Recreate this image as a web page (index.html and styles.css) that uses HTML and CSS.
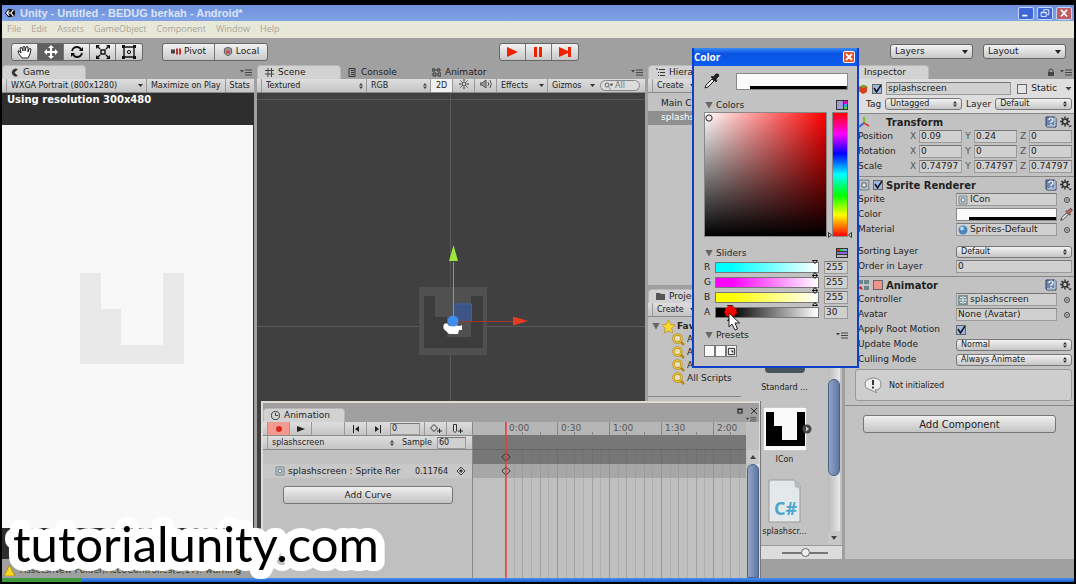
FILE: index.html
```html
<!DOCTYPE html>
<html lang="en">
<head>
  <meta charset="UTF-8">
  <meta name="viewport" content="width=device-width, initial-scale=1">
  <title>Unity - Untitled - BEDUG berkah - Android*</title>
  <link rel="stylesheet" href="styles.css">
</head>
<body>
  <!-- Shared icons -->
  <svg class="defs" aria-hidden="true">
    <symbol id="i-menu" viewBox="0 0 12 8"><path d="M0 2h4L2 4.500z" fill="#444"/><path d="M5 2h7M5 4.500h7M5 7h7" stroke="#444"/></symbol>
    <symbol id="i-gear" viewBox="0 0 12 12"><circle cx="5" cy="5.500" r="2.500" fill="none" stroke="#333" stroke-width="1.600"/><path d="M5 .5v2M5 8.500v2M0 5.500h2M8 5.500h2M1.500 2l1.400 1.400M7.100 7.600l1.400 1.400M1.500 9l1.400-1.400M7.100 3.400L8.500 2" stroke="#333" stroke-width="1.500"/><path d="M8 9.500h4l-2 2z" fill="#333"/></symbol>
    <symbol id="i-help" viewBox="0 0 12 12"><path d="M1 1h9l1 1v9H2l-1-1z" fill="#6f86ad" stroke="#2d3f63"/><path d="M10 1v9H2" fill="none" stroke="#dfe8f5"/><path d="M4 4q0-2 2-2t2 2q0 1-2 2v1M6 8v1" fill="none" stroke="#fff" stroke-width="1.200"/></symbol>
    <symbol id="i-pick" viewBox="0 0 8 8"><circle cx="4" cy="4" r="2.500" fill="none" stroke="#444"/><circle cx="4" cy="4" r=".8" fill="#444"/></symbol>
    <symbol id="i-drop" viewBox="0 0 16 16"><path d="M1 15l1-3 6-6 2 2-6 6z" fill="#eee" stroke="#222"/><path d="M7 4l5 5 1-1-1-2 3-3q0-3-3-2L9 4 8 3z" fill="currentColor" stroke="#111" stroke-width=".6"/></symbol>
    <symbol id="i-find" viewBox="0 0 13 13"><path d="M8 8l4 4" stroke="#b58a13" stroke-width="2.500"/><circle cx="5.500" cy="5.500" r="4" fill="#e5dfc0" stroke="#b58a13" stroke-width="2.400"/><circle cx="5.500" cy="5.500" r="4" fill="none" stroke="#f0cb3c" stroke-width="1.200"/></symbol>
    <symbol id="i-sprite" viewBox="0 0 10 10"><path d="M1 1h8v8H1z" fill="#b9c3c7" stroke="#7d8b91"/><circle cx="5" cy="5" r="2" fill="#dfe6e8" stroke="#6d7b80"/></symbol>
    <symbol id="i-key" viewBox="0 0 10 10"><path d="M5 .8L9.200 5 5 9.200.8 5z" fill="none" stroke="#333"/></symbol>
  </svg>

  <div class="app">
    <header class="titlebar">
      <svg class="unity-logo" viewBox="0 0 14 12"><path d="M1 6l4-5 7 1 1 4-1 4-7 1z" fill="#111"/><path d="M3 6l3-3M3 6l3 3M3 6h5M8 6l3-4M8 6l3 4" stroke="#fff" stroke-width="1.300"/></svg>
      <h1>Unity - Untitled - BEDUG berkah - Android*</h1>
      <div class="win-btns">
        <button class="win-btn" aria-label="Minimize"><svg viewBox="0 0 15 13"><path d="M3 8h6v2H3z" fill="#fff"/></svg></button>
        <button class="win-btn" aria-label="Restore"><svg viewBox="0 0 15 13"><path d="M6 4V2h6v6h-2M3 5h6v5H3zM3 5.500h6" fill="none" stroke="#fff"/></svg></button>
        <button class="win-btn close" aria-label="Close"><svg viewBox="0 0 15 13"><path d="M4 2l7 8M11 2l-7 8" stroke="#fff" stroke-width="2"/></svg></button>
      </div>
    </header>

    <nav class="menubar">
      <a href="#">File</a><a href="#">Edit</a><a href="#">Assets</a><a href="#">GameObject</a><a href="#">Component</a><a href="#">Window</a><a href="#">Help</a>
    </nav>

    <div class="toolbar">
      <div class="tools-left">
        <div class="btn-group tools">
          <button aria-label="Hand"><svg viewBox="0 0 16 14"><path d="M5 13L2 9 1 6q1-1 2 1l1 1L3 3q1-1 2 0l1 3V2q1-1 2 0v4l1-4q1-1 2 0v5l1-3q1-1 2 0l-1 5-2 4z" fill="#fff" stroke="#222"/></svg></button>
          <button class="on" aria-label="Move"><svg viewBox="0 0 16 14"><path d="M8 0l3 3H9v3h3V4l3 3-3 3V8H9v3h2l-3 3-3-3h2V8H4v2L1 7l3-3v2h3V3H5z" fill="#fff"/></svg></button>
          <button aria-label="Rotate"><svg viewBox="0 0 16 14"><path d="M3 6q1-4 5-4 3 0 4 3M13 8q-1 4-5 4-3 0-4-3" fill="none" stroke="#111" stroke-width="1.800"/><path d="M14 2v4h-4zM2 12V8h4z" fill="#111"/></svg></button>
          <button aria-label="Scale"><svg viewBox="0 0 16 14"><path d="M6 5h4v4H6zM5 4L2 1M11 4l3-3M5 10l-3 3M11 10l3 3" fill="none" stroke="#111" stroke-width="1.400"/><path d="M1 0h4L1 4zM15 0h-4l4 4zM1 14h4l-4-4zM15 14h-4l4-4z" fill="#111"/></svg></button>
          <button aria-label="Rect"><svg viewBox="0 0 16 14"><path d="M3 2h10v10H3z" fill="none" stroke="#111" stroke-width="1.400"/><circle cx="8" cy="7" r="1.600" fill="none" stroke="#111"/><path d="M1 0h3v3H1zM12 0h3v3h-3zM1 11h3v3H1zM12 11h3v3h-3z" fill="#111"/></svg></button>
        </div>
        <div class="btn-group pivot">
          <button><svg viewBox="0 0 10 8"><path d="M0 2h4v4H0z" fill="#444"/><path d="M5 1h2v6H5zM8 1h2v6H8z" fill="#b33"/></svg>Pivot</button>
          <button><svg viewBox="0 0 10 10"><path d="M5 0l4 2v5L5 10 1 7V2z" fill="#999" stroke="#555"/><path d="M3 4h4v3H3z" fill="#c44"/></svg>Local</button>
        </div>
      </div>
      <div class="btn-group play">
        <button aria-label="Play"><svg viewBox="0 0 14 12"><path d="M2 1l11 5-11 5z" fill="#ee2200"/></svg></button>
        <button aria-label="Pause"><svg viewBox="0 0 14 12"><path d="M3 1h3v10H3zM8 1h3v10H8z" fill="#ee2200"/></svg></button>
        <button aria-label="Step"><svg viewBox="0 0 14 12"><path d="M1 1l9 4V1h3v10h-3V7l-9 4z" fill="#ee2200"/></svg></button>
      </div>
      <div class="tools-right">
        <select class="top-select" aria-label="Layers"><option>Layers</option></select>
        <select class="top-select" aria-label="Layout"><option>Layout</option></select>
      </div>
    </div>

    <main class="workspace">
      <!-- Game view -->
      <section class="panel">
        <div class="tabs"><button class="tab active"><svg viewBox="0 0 8 8"><path d="M7 1a3.500 3.500 0 1 0 0 6L4 4z" fill="#333"/></svg>Game</button><svg class="tab-menu"><use href="#i-menu"/></svg></div>
        <div class="subbar game-bar">
          <select class="bar-select dd" aria-label="Aspect"><option>WXGA Portrait (800x1280)</option></select>
          <button>Maximize on Play</button>
          <button>Stats</button>
        </div>
        <div class="game-view">
          <p>Using resolution 300x480</p>
          <div class="game-screen"><svg viewBox="0 0 104 91"><path d="M0 0h21v36h20v36h42V0h21v91H0z" fill="#e9e9e9"/></svg></div>
        </div>
      </section>

      <!-- Scene view -->
      <section class="panel">
        <div class="tabs">
          <button class="tab active"><svg viewBox="0 0 9 9"><path d="M3 0v9M6.500 0v9M0 2.500h9M0 6h9" stroke="#444"/></svg>Scene</button>
          <button class="tab"><svg viewBox="0 0 9 9"><path d="M1 .5h6v8H1zM3 2.500h3M3 4.500h3M3 6.500h3" fill="none" stroke="#333"/></svg>Console</button>
          <button class="tab"><svg viewBox="0 0 9 9"><path d="M0 1h3v2H0zM5 1h3v2H5zM1 5h3v3H1zM6 5h3v3H6z" fill="none" stroke="#333"/></svg>Animator</button>
          <svg class="tab-menu"><use href="#i-menu"/></svg>
        </div>
        <div class="subbar scene-bar">
          <select class="bar-select ud shade" aria-label="Draw mode"><option>Textured</option></select>
          <select class="bar-select ud rgb" aria-label="Render mode"><option>RGB</option></select>
          <button class="lit">2D</button>
          <button class="ico" aria-label="Lighting"><svg viewBox="0 0 10 10"><circle cx="5" cy="5" r="2" fill="none" stroke="#333"/><path d="M5 0v2M5 8v2M0 5h2M8 5h2M1.500 1.500l1.200 1.200M7.300 7.300l1.200 1.200M1.500 8.500l1.200-1.200M7.300 2.700l1.200-1.200" stroke="#333"/></svg></button>
          <button class="ico" aria-label="Audio"><svg viewBox="0 0 12 10"><path d="M0 4h2l4-3v8L2 6H0z" fill="#999" stroke="#555"/><path d="M8 3q1.500 2 0 4M10 1q2.500 4 0 8" fill="none" stroke="#555"/></svg></button>
          <select class="bar-select dd effects" aria-label="Effects"><option>Effects</option></select>
          <select class="bar-select dd effects" aria-label="Gizmos"><option>Gizmos</option></select>
          <input class="search" type="text" value="All" aria-label="Search scene">
        </div>
        <svg class="scene-view" viewBox="0 1 388 467" preserveAspectRatio="xMinYMin slice">
          <path d="M0 7.500h388M193.500 0v467M0 234.500h388" stroke="#5a5a5a"/>
          <path d="M162 195h68v68h-68z" fill="#505050"/>
          <path d="M167 204h11v21h12v20h24v-41h12v52h-59z" fill="#3c3c3c"/>
          <path d="M196.500 212v17.500h18V212z" fill="#3d5585" stroke="#3b62b0"/>
          <path d="M196.500 170v60" stroke="#86a848"/>
          <path d="M196 229.500h60" stroke="#a83426"/>
          <path d="M196.500 153l4.500 16h-9z" fill="#9be83c"/>
          <path d="M271 229l-15 4.500v-9z" fill="#e83c1e"/>
          <path d="M187 232q4-2 5 2l5-1 6 1 2-1v5h-3l-1 4h-9l-3-3q-4-2-2-7z" fill="#fff"/>
          <circle cx="196" cy="229" r="5.500" fill="#3f8fef"/>
        </svg>
      </section>

      <!-- Hierarchy and project -->
      <div class="stack">
        <section class="panel hierarchy">
          <div class="tabs"><button class="tab active wide"><svg viewBox="0 0 9 9"><path d="M0 1h2M3 1.500h6M2 4.500h1M4 4.500h5M2 7.500h1M4 7.500h5" stroke="#333"/></svg>Hierarchy</button></div>
          <div class="subbar"><select class="bar-select dd" aria-label="Create object"><option>Create</option></select></div>
          <ul class="tree">
            <li>Main Camera</li>
            <li class="selected">splashscreen</li>
          </ul>
        </section>
        <section class="panel project">
          <div class="tabs"><button class="tab active wide"><svg viewBox="0 0 9 9"><path d="M0 1h4l1 1h4v6H0z" fill="#555"/></svg>Project</button></div>
          <div class="subbar"><select class="bar-select dd" aria-label="Create asset"><option>Create</option></select></div>
          <div class="project-body">
            <ul class="favorites">
              <li class="fav-head"><i class="fold"></i><svg viewBox="0 0 12 12"><path d="M6 0l2 4 4 .5-3 3 .8 4.500L6 10l-3.800 2L3 7.500l-3-3L4 4z" fill="#fbd734" stroke="#b8860b" stroke-width=".6"/></svg>Favorites</li>
              <li><svg><use href="#i-find"/></svg>All Materials</li>
              <li><svg><use href="#i-find"/></svg>All Models</li>
              <li><svg><use href="#i-find"/></svg>All Prefabs</li>
              <li><svg><use href="#i-find"/></svg>All Scripts</li>
            </ul>
            <div class="assets">
              <figure><svg viewBox="0 0 44 44"><path d="M2 10q0-4 4-4h10l4 4h18q4 0 4 4v20q0 4-4 4H6q-4 0-4-4z" fill="#46545c"/></svg><figcaption>Standard ...</figcaption></figure>
              <figure><svg viewBox="0 0 44 44"><path d="M0 0h44v44H0z" fill="#fafafa" stroke="#999"/><path d="M3 5h8v14h8v14h15V5h8v34H3z" fill="#000"/></svg><button class="expand" aria-label="Expand"><svg viewBox="0 0 10 10"><circle cx="5" cy="5" r="4.500" fill="#444"/><path d="M4 2.500L7 5 4 7.500z" fill="#ccc"/></svg></button><figcaption>ICon</figcaption></figure>
              <figure><svg viewBox="0 0 44 44"><path d="M6 1h25l6 5v37H6z" fill="#e3e8ea" stroke="#999"/><path d="M31 1l1 7 5 2V4z" fill="#b5bcbf"/><text x="11" y="36" class="cs">C#</text></svg><figcaption>splashscr...</figcaption></figure>
            </div>
            <div class="scroll"><div class="scroll-thumb"></div><button class="arrow down" aria-label="Scroll down"></button></div>
          </div>
          <div class="project-foot"><input type="range" min="0" max="100" value="50" aria-label="Icon size"></div>
        </section>
      </div>

      <!-- Inspector -->
      <section class="panel inspector">
        <div class="tabs"><button class="tab active">Inspector</button><svg class="lock" viewBox="0 0 8 9"><path d="M1 4h6v4H1z" fill="#444"/><path d="M2 4V2q2-2 4 0v2" fill="none" stroke="#444"/></svg><svg class="tab-menu"><use href="#i-menu"/></svg></div>
        <div class="object-head">
          <div class="object-row">
            <svg class="cube" viewBox="0 0 16 16"><path d="M2 4l7-3 6 3-1 9-6 3-6-4z" fill="#d8401c"/><path d="M2 4l7 2 6-2-6-3z" fill="#67b52e"/></svg>
            <input type="checkbox" checked aria-label="Active">
            <input class="field" type="text" value="splashscreen" aria-label="Name">
            <input type="checkbox" id="static"><label for="static">Static</label><i class="caret"></i>
          </div>
          <div class="object-row tags">
            <label for="tag">Tag</label><select id="tag" class="popup"><option>Untagged</option></select>
            <label for="layer">Layer</label><select id="layer" class="popup"><option>Default</option></select>
          </div>
        </div>

        <div class="component">
          <h2><svg viewBox="0 0 12 12"><path d="M6 7V1" stroke="#7cc02c" stroke-width="2"/><path d="M6 7l5 3" stroke="#d43" stroke-width="2"/><path d="M6 7l-5 4" stroke="#36c" stroke-width="2"/></svg><span class="no-check">Transform</span><svg><use href="#i-help"/></svg><svg><use href="#i-gear"/></svg></h2>
          <div class="vec"><span>Position</span><label for="px">X</label><input id="px" class="field" value="0.09"><label for="py">Y</label><input id="py" class="field" value="0.24"><label for="pz">Z</label><input id="pz" class="field" value="0"></div>
          <div class="vec"><span>Rotation</span><label for="rx">X</label><input id="rx" class="field" value="0"><label for="ry">Y</label><input id="ry" class="field" value="0"><label for="rz">Z</label><input id="rz" class="field" value="0"></div>
          <div class="vec"><span>Scale</span><label for="sx">X</label><input id="sx" class="field" value="0.74797"><label for="sy">Y</label><input id="sy" class="field" value="0.74797"><label for="sz">Z</label><input id="sz" class="field" value="0.74797"></div>
        </div>

        <div class="component">
          <h2><svg><use href="#i-sprite"/></svg><input type="checkbox" checked aria-label="Sprite Renderer enabled"><span>Sprite Renderer</span><svg><use href="#i-help"/></svg><svg><use href="#i-gear"/></svg></h2>
          <div class="prop"><span>Sprite</span><button class="field obj"><svg><use href="#i-sprite"/></svg>ICon</button><svg><use href="#i-pick"/></svg></div>
          <div class="prop"><span>Color</span><button class="swatch" aria-label="Sprite color"></button><svg class="drop red"><use href="#i-drop"/></svg></div>
          <div class="prop"><span>Material</span><button class="field obj"><svg viewBox="0 0 10 10"><circle cx="5" cy="5" r="4.500" fill="#4a86bd"/><circle cx="4" cy="3.500" r="2" fill="#b8d8f0"/></svg>Sprites-Default</button><svg><use href="#i-pick"/></svg></div>
          <div class="prop full spaced"><label for="sort">Sorting Layer</label><select id="sort" class="popup"><option>Default</option></select></div>
          <div class="prop full"><label for="order">Order in Layer</label><input id="order" class="field" value="0"></div>
        </div>

        <div class="component">
          <h2><svg viewBox="0 0 12 12"><path d="M0 1h5v4H0zM6 1h5v4H6zM6 7h5v4H6z" fill="#6d858c"/><path d="M0 9l3-2 2 4z" fill="#d11"/></svg><input type="checkbox" class="rec" aria-label="Animator enabled"><span>Animator</span><svg><use href="#i-help"/></svg><svg><use href="#i-gear"/></svg></h2>
          <div class="prop"><span>Controller</span><button class="field obj"><svg viewBox="0 0 10 10"><path d="M0 0h10v10H0z" fill="#7b8f95"/><path d="M1 5h8M5 1v8M2 2.500h2M6 2.500h2M2 7.500h2M6 7.500h2" stroke="#e6eef0"/></svg>splashscreen</button><svg><use href="#i-pick"/></svg></div>
          <div class="prop"><span>Avatar</span><button class="field obj">None (Avatar)</button><svg><use href="#i-pick"/></svg></div>
          <div class="prop full"><label for="root">Apply Root Motion</label><input type="checkbox" id="root" checked></div>
          <div class="prop full"><label for="update">Update Mode</label><select id="update" class="popup"><option>Normal</option></select></div>
          <div class="prop full"><label for="cull">Culling Mode</label><select id="cull" class="popup"><option>Always Animate</option></select></div>
          <p class="helpbox"><svg viewBox="0 0 18 16"><path d="M9 1q8 0 8 6t-6 6l2 3-6-3Q1 12 1 7t8-6z" fill="#eee" stroke="#888"/><path d="M9 3v5M9 9.500v2" stroke="#222" stroke-width="1.800"/></svg>Not initialized</p>
        </div>
        <button class="wide-btn add-component">Add Component</button>
      </section>
    </main>

    <footer class="statusbar"><svg viewBox="0 0 12 12"><path d="M6 0l6 12H0z" fill="#fbd51c" stroke="#8a6d00" stroke-width=".6"/></svg>Assets/New Folder/AccoControlles(3,17): warning</footer>
    <div class="taskbar"></div>
  </div>

  <!-- Animation window -->
  <section class="anim-window">
    <div class="tabs">
      <button class="tab active"><svg viewBox="0 0 10 10"><circle cx="5" cy="5" r="4.500" fill="none" stroke="#333"/><path d="M5 2v3h3" fill="none" stroke="#333"/></svg>Animation</button>
      <div class="anim-btns">
        <svg viewBox="0 0 24 7"><path d="M3 1h4v4H3zM3 1.500h4" fill="none" stroke="#222" stroke-width="1.200"/><path d="M16 0l6 6M22 0l-6 6" stroke="#333"/></svg>
        <svg class="tab-menu"><use href="#i-menu"/></svg>
      </div>
    </div>
    <div class="anim-body">
      <div class="anim-left">
        <div class="subbar anim-bar">
          <button class="record" aria-label="Record"><svg viewBox="0 0 8 8"><circle cx="4" cy="4" r="3" fill="#d42a20"/></svg></button>
          <button aria-label="Play"><svg viewBox="0 0 8 8"><path d="M0 1l8 3-8 3z" fill="#222"/></svg></button>
          <span class="blank"></span>
          <button aria-label="Previous key"><svg viewBox="0 0 8 8"><path d="M1.500 0v8" stroke="#222"/><path d="M7 1v6L3 4z" fill="#222"/></svg></button>
          <button aria-label="Next key"><svg viewBox="0 0 8 8"><path d="M6.500 0v8" stroke="#222"/><path d="M1 1v6l4-3z" fill="#222"/></svg></button>
          <input class="field" value="0" aria-label="Frame">
          <button aria-label="Add key"><svg class="w12" viewBox="0 0 12 9"><path d="M4 .5L7.500 4 4 7.500.5 4z" fill="none" stroke="#333"/><path d="M7 7h5M9.500 4.500v5" stroke="#222"/></svg></button>
          <button aria-label="Add event"><svg class="w12" viewBox="0 0 12 9"><path d="M1.500.5h3V7L3 8.500 1.500 7z" fill="#ddd" stroke="#333"/><path d="M6 7h5M8.500 4.500v5" stroke="#222"/></svg></button>
        </div>
        <div class="subbar clip-bar">
          <select class="bar-select ud" aria-label="Clip"><option>splashscreen</option></select>
          <label for="sample">Sample</label><input id="sample" class="field" value="60">
        </div>
        <div class="curve"><svg><use href="#i-sprite"/></svg><span>splashscreen : Sprite Rer</span><b>0.11764</b><svg viewBox="0 0 10 10"><path d="M5 1l4 4-4 4-4-4z" fill="none" stroke="#444"/><path d="M5 3l2 2-2 2-2-2z" fill="#444"/></svg></div>
        <button class="wide-btn add-curve">Add Curve</button>
      </div>
      <div class="timeline">
        <div class="ruler"><span>0:00</span><span>0:30</span><span>1:00</span><span>1:30</span><span>2:00</span></div>
        <div class="dope top"></div>
        <div class="dope keys"><svg><use href="#i-key"/></svg></div>
        <div class="dope row"><svg><use href="#i-key"/></svg></div>
        <div class="playhead"></div>
      </div>
      <div class="scroll anim-scroll"><button class="arrow up" aria-label="Scroll up"></button><div class="scroll-thumb"></div></div>
    </div>
  </section>

  <!-- Color picker -->
  <section class="color-window">
    <div class="color-title"><h2>Color</h2><button aria-label="Close"><svg viewBox="0 0 10 10"><path d="M2 2l6 6M8 2L2 8" stroke="#fff" stroke-width="1.800"/></svg></button></div>
    <div class="color-body">
      <div class="color-top"><svg class="drop"><use href="#i-drop"/></svg><div class="swatch"></div></div>
      <h3><i class="fold"></i>Colors<svg viewBox="0 0 12 10"><path d="M0 0h12v10H0z" fill="#333"/><path d="M1 1h6v8H1z" fill="#a59ad8"/><path d="M8 1h3v3H8z" fill="#e0c"/><path d="M8 4h3v3H8z" fill="#3ad"/><path d="M8 7h3v2H8z" fill="#4d2"/></svg></h3>
      <div class="pickers"><div class="sv"></div><div class="hue"><svg viewBox="0 0 24 6"><path d="M.5.5v5L3.500 3zM23.500.5v5L20.500 3z" fill="#ccc" stroke="#333"/></svg></div></div>
      <h3><i class="fold"></i>Sliders<svg viewBox="0 0 12 10"><path d="M0 0h12v10H0z" fill="#333"/><path d="M1 1h3v2H1z" fill="#d33"/><path d="M4 1h3v2H4z" fill="#3c5"/><path d="M7 1h4v2H7z" fill="#7ae"/><path d="M1 4h10v2H1z" fill="#86d"/><path d="M1 7h10v2H1z" fill="#bbb"/></svg></h3>
      <div class="chan"><label for="cr">R</label><input type="range" id="cr" class="r" max="255" value="255"><input class="field" value="255" aria-label="Red value"></div>
      <div class="chan"><label for="cg">G</label><input type="range" id="cg" class="g" max="255" value="255"><input class="field" value="255" aria-label="Green value"></div>
      <div class="chan"><label for="cb">B</label><input type="range" id="cb" class="b" max="255" value="255"><input class="field" value="255" aria-label="Blue value"></div>
      <div class="chan"><label for="ca">A</label><input type="range" id="ca" class="a" max="255" value="30"><input class="field" value="30" aria-label="Alpha value"></div>
      <h3 class="presets-head"><i class="fold"></i>Presets<svg class="menu"><use href="#i-menu"/></svg></h3>
      <div class="presets"><button aria-label="Preset 1"></button><button aria-label="Preset 2"></button><button aria-label="Add preset"><svg viewBox="0 0 10 10"><path d="M1.500 1.500h7v7h-7z" fill="#eee" stroke="#111"/><path d="M4 4h3v3z" fill="#333"/></svg></button></div>
    </div>
  </section>

  <!-- Mouse pointer -->
  <svg class="cursor" viewBox="0 0 18 26"><path d="M6 0l1.500 2L10 1l.5 2.500 2.500.5-1 2 1.500 2-2.500 1-.5 2.500L8 11l-2 1.500L4 11l-2.500.500L1.500 9 0 7l1.500-2L1 3l2.500-.5L4 1z" fill="#f00"/><path d="M5 8v14l3-3 3 6 2.500-1-2.500-6h4.500z" fill="#fff" stroke="#222"/></svg>

  <svg class="watermark" viewBox="0 0 400 70"><text x="13" y="48">tutorialunity.com</text></svg>
</body>
</html>
```
FILE: styles.css
```css
* {
  margin: 0;
  padding: 0;
  box-sizing: border-box;
}
body {
  height: 100vh;
  position: relative;
  overflow: hidden;
  background: #000;
  color: #222;
  font-family: "DejaVu Sans", Verdana, sans-serif;
  font-size: 9px;
  line-height: 13px;
}
button, input, select {
  font: inherit;
  color: inherit;
  border: none;
  background: none;
  border-radius: 0;
  min-width: 0;
}
select {
  appearance: none;
}
ul {
  list-style: none;
}
a {
  color: inherit;
  text-decoration: none;
}
svg {
  flex: none;
}
.defs {
  display: none;
}
.app {
  display: flex;
  flex-direction: column;
  height: 100vh;
  padding: 5px 2px 2px;
}

/* Title, menu, toolbar */
.titlebar {
  display: flex;
  align-items: center;
  height: 16px;
  padding-left: 2px;
  background: linear-gradient(#6f8fdc, #7fa4e6);
  color: #dbe4fa;
}
.titlebar h1 {
  flex: 1;
  margin-left: 4px;
  font: bold 11px/13px "Liberation Sans", Arial, sans-serif;
  white-space: nowrap;
}
.unity-logo {
  width: 12px;
  height: 12px;
}
.win-btns {
  display: flex;
  gap: 3px;
  padding-right: 2px;
}
.win-btn {
  width: 16px;
  height: 13px;
  border: 1px solid #c5d3f5;
  border-radius: 2px;
  background: #3e68d8;
}
.win-btn.close {
  background: #c05c66;
}
.win-btn svg {
  display: block;
  width: 14px;
  height: 11px;
}
.menubar {
  display: flex;
  align-items: center;
  gap: 10px;
  height: 17px;
  padding: 0 0 2px 5px;
  background: #e8e8d8;
  color: #a8a698;
  font: 9px/13px "Open Sans", Arial, sans-serif;
}
.toolbar {
  display: grid;
  grid-template-columns: 1fr auto 1fr;
  align-items: center;
  height: 27px;
  padding: 0 8px 0 9px;
  background: #a0a0a0;
}
.tools-left, .tools-right {
  display: flex;
  gap: 19px;
}
.tools-right {
  justify-content: flex-end;
  gap: 10px;
}
.btn-group {
  display: flex;
  align-items: center;
  border: 1px solid #666;
  border-radius: 3px;
  background: linear-gradient(#f2f2f2, #c8c8c8);
}
.btn-group button {
  display: flex;
  align-items: center;
  justify-content: center;
  gap: 3px;
  width: 26px;
  height: 16px;
  border-right: 1px solid #777;
}
.btn-group button:last-child {
  border-right: none;
}
.btn-group button.on {
  background: #606060;
}
.tools svg {
  width: 16px;
  height: 14px;
}
.pivot button {
  width: 52px;
}
.pivot svg {
  width: 10px;
  height: 9px;
}
.play svg {
  width: 14px;
  height: 12px;
}
.top-select {
  width: 83px;
  height: 15px;
  padding-left: 4px;
  border: 1px solid #666;
  border-radius: 3px;
  background: url("data:image/svg+xml,%3Csvg xmlns='http://www.w3.org/2000/svg' width='6' height='4'%3E%3Cpath d='M0 0h6L3 4z' fill='%23222'/%3E%3C/svg%3E") 94% 50% no-repeat, linear-gradient(#f4f4f4, #c8c8c8);
}

/* Panels */
.workspace {
  display: grid;
  grid-template-columns: 252fr 388fr 194fr 229fr;
  grid-template-rows: minmax(0, 1fr);
  gap: 3px;
  flex: 1;
  min-height: 0;
  background: #a0a0a0;
}
.panel {
  display: flex;
  flex-direction: column;
  min-width: 0;
  min-height: 0;
  background: #c2c2c2;
}
.tabs {
  display: flex;
  align-items: center;
  height: 14px;
  background: #a0a0a0;
  flex: none;
}
.tab {
  display: flex;
  align-items: center;
  gap: 4px;
  width: 84px;
  height: 14px;
  padding-left: 7px;
}
.tab.active {
  border: 1px solid #b8b8b8;
  border-bottom: none;
  border-radius: 4px 4px 0 0;
  background: #d2d2d2;
}
.tab svg {
  width: 9px;
  height: 9px;
}
.tab-menu {
  width: 12px;
  height: 8px;
  margin-left: auto;
  margin-right: 2px;
}
.subbar {
  display: flex;
  align-items: center;
  height: 14px;
  padding-left: 4px;
  background: linear-gradient(#dedede, #c4c4c4);
  border-bottom: 1px solid #8a8a8a;
  font-size: 8px;
  flex: none;
}
.subbar button, .bar-select {
  height: 13px;
  padding: 0 4px;
  border-left: 1px solid #999;
  white-space: nowrap;
}
.bar-select.dd {
  padding-right: 14px;
  background: url("data:image/svg+xml,%3Csvg xmlns='http://www.w3.org/2000/svg' width='5' height='3'%3E%3Cpath d='M0 0h5L2.500 3z' fill='%23333'/%3E%3C/svg%3E") right 3px top 5px no-repeat;
}
.bar-select.ud {
  background: url("data:image/svg+xml,%3Csvg xmlns='http://www.w3.org/2000/svg' width='4' height='6'%3E%3Cpath d='M0 2.500h4L2 0zM0 3.500h4L2 6z' fill='%23444'/%3E%3C/svg%3E") right 3px center no-repeat;
}
.game-bar .bar-select {
  flex: 1;
}
.game-view {
  display: flex;
  flex-direction: column;
  flex: 1;
  padding-bottom: 31px;
  background: #2e2e2e;
  color: #fff;
}
.game-view p {
  height: 32px;
  padding-left: 5px;
  font-size: 10px;
  font-weight: bold;
}
.game-screen {
  display: flex;
  align-items: center;
  justify-content: center;
  flex: 1;
  margin-right: 1px;
  padding: 0 0 17px 8px;
  background: #f8f8f8;
}
.game-screen svg {
  width: 104px;
  height: 91px;
}
.scene-bar .shade {
  width: 105px;
}
.scene-bar .rgb {
  width: 64px;
}
.scene-bar .ico {
  width: 22px;
}
.scene-bar .ico svg {
  width: 12px;
  height: 10px;
}
.scene-bar .lit {
  width: 22px;
  background: #f0f0f0;
}
.scene-bar .effects {
  width: 51px;
}
.search {
  width: 40px;
  height: 11px;
  margin-left: auto;
  margin-right: 5px;
  padding-left: 14px;
  border: 1px solid #888;
  border-radius: 6px;
  color: #777;
  background: url("data:image/svg+xml,%3Csvg xmlns='http://www.w3.org/2000/svg' width='9' height='8'%3E%3Ccircle cx='3' cy='3' r='2' fill='none' stroke='%23666'/%3E%3Cpath d='M4.500 4.500l2 3M6 2h3L7.500 4z' stroke='%23666' fill='%23666' stroke-width='.8'/%3E%3C/svg%3E") 3px 1px no-repeat #ddd;
}
.scene-view {
  display: block;
  flex: 1;
  width: 100%;
  min-height: 0;
  background: #404040;
}

/* Hierarchy, project */
.stack {
  display: flex;
  flex-direction: column;
  gap: 4px;
  min-width: 0;
  min-height: 0;
}
.hierarchy {
  height: 220px;
}
.tab.wide {
  width: 90px;
}
.tree {
  padding-top: 4px;
}
.tree li {
  height: 14px;
  padding-left: 13px;
}
.tree .selected {
  background: #8f8f8f;
  color: #fff;
}
.project {
  flex: 1;
}
.project-body {
  display: flex;
  flex: 1;
  min-height: 0;
  overflow: hidden;
}
.favorites {
  width: 93px;
  height: 80px;
  padding-top: 2px;
  border-bottom: 1px solid #888;
  flex: none;
}
.favorites li {
  display: flex;
  align-items: center;
  gap: 2px;
  height: 13px;
  padding-left: 24px;
  white-space: nowrap;
}
.favorites .fav-head {
  height: 14px;
  padding-left: 4px;
  font-weight: bold;
}
.favorites svg {
  width: 13px;
  height: 13px;
}
.fold {
  width: 8px;
  height: 7px;
  background: #666;
  clip-path: polygon(0 0, 100% 0, 50% 100%);
}
.assets {
  flex: 1;
  padding-top: 18px;
}
.assets figure {
  position: relative;
  display: flex;
  flex-direction: column;
  align-items: center;
  gap: 2px;
  height: 72px;
  font-size: 8px;
}
.assets figure > svg {
  width: 44px;
  height: 44px;
}
.cs {
  font: bold 18px "Open Sans", sans-serif;
  fill: #4ea6cc;
}
.expand {
  position: absolute;
  right: 16px;
  top: 17px;
  width: 10px;
  height: 10px;
}
.expand svg {
  display: block;
}
.scroll {
  display: flex;
  flex-direction: column;
  width: 12px;
  margin-right: 2px;
  background: linear-gradient(90deg, #bbb, #e8e8e8);
}
.scroll-thumb {
  height: 97px;
  margin-top: 62px;
  border: 1px solid #4a5f85;
  border-radius: 6px;
  background: linear-gradient(90deg, #93a5c4, #5d78a6);
}
.arrow {
  width: 12px;
  height: 14px;
  background: #c8c8c8;
}
.arrow::before {
  content: "";
  display: block;
  width: 6px;
  height: 4px;
  margin: auto;
  background: #444;
  clip-path: polygon(0 0, 100% 0, 50% 100%);
}
.arrow.up::before {
  clip-path: polygon(50% 0, 100% 100%, 0 100%);
}
.arrow.down {
  margin-top: auto;
}
.project-foot {
  display: flex;
  align-items: center;
  justify-content: flex-end;
  height: 14px;
  padding-right: 14px;
  border-top: 1px solid #999;
  background: #dcdcdc;
}
.project-foot input {
  appearance: none;
  width: 46px;
  height: 2px;
  background: #777;
}
.project-foot input::-webkit-slider-thumb {
  appearance: none;
  width: 9px;
  height: 9px;
  border: 1px solid #666;
  border-radius: 50%;
  background: #eee;
}

/* Inspector */
.inspector .tab {
  padding-left: 18px;
}
.inspector .tab-menu {
  margin-left: 5px;
}
.lock {
  width: 8px;
  height: 9px;
  margin-left: auto;
}
.field {
  height: 13px;
  padding: 0 1px;
  border: 1px solid #9a9a9a;
  border-top-color: #777;
  background: #d0d0d0;
}
.popup {
  height: 12px;
  padding-left: 4px;
  border: 1px solid #777;
  border-radius: 3px;
  font-size: 8px;
  line-height: 10px;
  background: url("data:image/svg+xml,%3Csvg xmlns='http://www.w3.org/2000/svg' width='4' height='6'%3E%3Cpath d='M0 2.500h4L2 0zM0 3.500h4L2 6z' fill='%23333'/%3E%3C/svg%3E") right 4px center no-repeat, linear-gradient(#f2f2f2, #c6c6c6);
}
input[type="checkbox"] {
  appearance: none;
  width: 10px;
  height: 10px;
  border: 1px solid #666;
  background: #e4e4e4;
  flex: none;
}
input[type="checkbox"]:checked {
  background: url("data:image/svg+xml,%3Csvg xmlns='http://www.w3.org/2000/svg' width='8' height='8'%3E%3Cpath d='M1 3l2.500 4L8 0' fill='none' stroke='%23112' stroke-width='1.500'/%3E%3C/svg%3E") #9db8de;
}
input[type="checkbox"].rec {
  background: #ee9488;
}
.object-head {
  padding: 2px 2px 1px 13px;
  background: #dedede;
  border-bottom: 1px solid #888;
}
.object-row {
  display: flex;
  align-items: center;
  gap: 4px;
  height: 15px;
}
.object-row .field {
  flex: 1;
  margin-right: 2px;
}
.cube {
  width: 10px;
  height: 14px;
}
.caret {
  width: 7px;
  height: 4px;
  margin-left: 4px;
  background: #444;
  clip-path: polygon(0 0, 100% 0, 50% 100%);
}
.tags {
  height: 16px;
  padding-left: 8px;
}
.tags .popup {
  flex: 1;
}
.component {
  padding: 1px 2px 2px 13px;
  border-bottom: 1px solid #888;
}
.component h2 {
  display: flex;
  align-items: center;
  gap: 3px;
  height: 14px;
  font-size: 10px;
}
.component h2 span {
  flex: 1;
}
.component h2 .no-check {
  margin-left: 13px;
}
.component h2 svg {
  width: 12px;
  height: 12px;
}
.vec {
  display: grid;
  grid-template-columns: 52px 9px 42fr 12px 42fr 12px 42fr;
  align-items: center;
  height: 15px;
}
.vec label {
  text-align: center;
  color: #555;
}
.vec label:first-of-type {
  text-align: left;
}
.prop {
  display: grid;
  grid-template-columns: 98px 1fr 15px;
  align-items: center;
  height: 15px;
}
.prop.full {
  grid-template-columns: 98px 1fr;
}
.prop.spaced {
  height: 22px;
  padding-top: 7px;
}
.prop > svg {
  width: 8px;
  height: 8px;
  margin-left: 6px;
}
.prop > svg.red {
  width: 13px;
  height: 13px;
  margin-left: 3px;
  color: #b56a62;
}
.obj {
  display: flex;
  align-items: center;
  gap: 2px;
}
.obj svg {
  width: 10px;
  height: 10px;
}
.swatch {
  height: 13px;
  border: 1px solid #888;
  background: linear-gradient(#000, #000) right bottom / 88% 3px no-repeat, #fafafa;
}
.helpbox {
  display: flex;
  align-items: center;
  gap: 7px;
  height: 32px;
  margin: 2px 0 2px -3px;
  padding-left: 8px;
  border: 1px solid #999;
  border-radius: 3px;
  background: #cecece;
  font-size: 8px;
}
.helpbox svg {
  width: 18px;
  height: 16px;
}
.wide-btn {
  height: 18px;
  border: 1px solid #777;
  border-radius: 3px;
  background: linear-gradient(#f0f0f0, #c4c4c4);
}
.add-component {
  margin: 9px 18px;
  font-size: 10px;
}

/* Bottom bars */
.statusbar {
  display: flex;
  align-items: center;
  gap: 5px;
  height: 19px;
  padding: 3px 0 0 2px;
  background: #a0a0a0;
  color: #3a3a10;
}
.statusbar svg {
  width: 11px;
  height: 11px;
}
.taskbar {
  height: 4px;
  background: linear-gradient(90deg, #3f9a3f 0 80px, transparent 0), linear-gradient(#4a90ec, #1c5fd0);
}

/* Animation window */
.anim-window {
  position: absolute;
  left: 261px;
  top: 401px;
  width: 500px;
  bottom: 6px;
  display: flex;
  flex-direction: column;
  padding: 2px 1px 0 2px;
  background: #e0dbd5;
  border-right: 1px solid #777;
}
.anim-window .tabs {
  height: 19px;
  padding-top: 5px;
}
.anim-window .tab {
  width: 82px;
}
.anim-btns {
  display: flex;
  flex-direction: column;
  align-items: flex-end;
  gap: 1px;
  margin-left: auto;
}
.anim-btns svg {
  width: 24px;
  height: 7px;
}
.anim-btns .tab-menu {
  width: 12px;
}
.anim-body {
  display: flex;
  flex: 1;
  min-height: 0;
  background: #c0c0c0;
}
.anim-left {
  display: flex;
  flex-direction: column;
  width: 210px;
  border-right: 1px solid #888;
  flex: none;
}
.anim-bar button {
  display: flex;
  align-items: center;
  justify-content: center;
  width: 22px;
}
.anim-bar .record {
  background: #f29a90;
}
.anim-bar .blank {
  width: 33px;
  height: 13px;
  border-left: 1px solid #999;
}
.anim-bar svg {
  width: 8px;
  height: 8px;
}
.anim-bar .w12 {
  width: 12px;
  height: 9px;
}
.anim-bar .field {
  width: 30px;
  height: 12px;
  margin: 0 4px 0 2px;
}
.clip-bar {
  gap: 5px;
}
.clip-bar select {
  width: 130px;
}
.clip-bar .field {
  width: 29px;
  height: 12px;
}
.curve {
  display: flex;
  align-items: center;
  gap: 3px;
  height: 14px;
  margin-top: 14px;
  padding: 0 6px 0 12px;
  background: #c8c8c8;
}
.curve span {
  flex: 1;
  white-space: nowrap;
}
.curve b {
  margin-right: 5px;
  font-weight: normal;
  font-size: 8px;
}
.curve svg {
  width: 10px;
  height: 10px;
}
.add-curve {
  margin: 8px 19px 0 20px;
}
.timeline {
  position: relative;
  display: flex;
  flex-direction: column;
  flex: 1;
  min-width: 0;
  background: repeating-linear-gradient(90deg, #969696 0 1px, transparent 1px 9px, #b0b0b0 9px 10px, transparent 10px 17px, #a2a2a2 17px 18px, transparent 18px 26px, #b0b0b0 26px 27px, transparent 27px 35px, #a2a2a2 35px 36px, transparent 36px 43px, #b0b0b0 43px 44px, transparent 44px 52px) 32px 0 no-repeat, #c0c0c0;
}
.ruler {
  display: flex;
  height: 14px;
  padding-left: 32px;
  color: #555;
  border-bottom: 1px solid #777;
  background: repeating-linear-gradient(90deg, #888 0 1px, transparent 1px 17px, #888 17px 18px, transparent 18px 35px, #888 35px 36px, transparent 36px 52px) 32px 10px / 100% 4px no-repeat, #b6b6b6;
}
.ruler span {
  width: 52px;
  padding-left: 3px;
  border-left: 1px solid #888;
  flex: none;
}
.ruler span:last-child {
  width: 32px;
}
.dope {
  display: flex;
  align-items: center;
  height: 14px;
  padding-left: 28px;
}
.dope svg {
  width: 10px;
  height: 10px;
}
.dope.top {
  background: #777;
  border-bottom: 1px solid #666;
}
.dope.keys {
  background: rgba(100, 100, 100, 0.8);
}
.dope.row {
  background: rgba(150, 150, 150, 0.6);
}
.playhead {
  position: absolute;
  left: 32px;
  top: 0;
  bottom: 0;
  width: 2px;
  background: rgba(235, 60, 60, 0.7);
}
.anim-scroll {
  margin: 28px 0 0 1px;
  flex: none;
}
.anim-scroll .scroll-thumb {
  flex: 1;
  margin-top: 0;
  border-radius: 6px 6px 0 0;
}

/* Color window */
.color-window {
  position: absolute;
  left: 692px;
  top: 48px;
  width: 167px;
  padding: 0 2px 2px;
  background: #0d3fc8;
}
.color-title {
  display: flex;
  align-items: center;
  justify-content: space-between;
  height: 18px;
  background: linear-gradient(#3c8cf4, #0a55e4 30%, #0a5cf0);
  color: #fff;
}
.color-title h2 {
  font: bold 10px/13px "Open Sans", sans-serif;
}
.color-title button {
  width: 12px;
  height: 12px;
  margin-right: 2px;
  border: 1px solid #fff;
  border-radius: 2px;
  background: #e0502c;
}
.color-title svg {
  display: block;
}
.color-body {
  padding: 7px 9px 9px 10px;
  background: #c2c2c2;
}
.color-top {
  display: flex;
  justify-content: space-between;
}
.drop {
  width: 16px;
  height: 16px;
  color: #222;
}
.color-top .swatch {
  width: 112px;
  height: 17px;
}
.color-body h3 {
  display: flex;
  align-items: center;
  gap: 3px;
  height: 14px;
  padding-left: 1px;
  font-size: 9px;
  font-weight: normal;
}
.color-body .color-top + h3 {
  margin-top: 8px;
}
.color-body h3 svg {
  width: 12px;
  height: 10px;
  margin-left: auto;
}
.color-body h3 .menu {
  height: 8px;
}
.pickers {
  display: flex;
  gap: 5px;
  height: 125px;
  margin-bottom: 9px;
}
.sv {
  flex: 1;
  border: 1px solid #888;
  background: radial-gradient(circle at 4px 5px, transparent 2px, #333 3px, transparent 4px), linear-gradient(transparent, #000), linear-gradient(90deg, #fff, #f00);
}
.hue {
  position: relative;
  width: 16px;
  border: 1px solid #888;
  background: linear-gradient(#f00, #f0f 17%, #00f 33%, #0ff 50%, #0f0 67%, #ff0 83%, #f00);
}
.hue svg {
  position: absolute;
  left: -5px;
  bottom: -2px;
  width: 24px;
  height: 6px;
}
.chan {
  display: grid;
  grid-template-columns: 11px 104px 24px;
  align-items: center;
  height: 15px;
}
.chan .field {
  margin-left: 5px;
  width: 24px;
}
.chan input[type="range"] {
  appearance: none;
  width: 104px;
  height: 11px;
  border: 1px solid #777;
}
.chan input[type="range"]::-webkit-slider-thumb {
  appearance: none;
  width: 6px;
  height: 16px;
  background: url("data:image/svg+xml,%3Csvg xmlns='http://www.w3.org/2000/svg' width='6' height='16'%3E%3Cpath d='M.5.5h5L3 3.500zM.5 15.500h5L3 12.500z' fill='%23ccc' stroke='%23111'/%3E%3C/svg%3E");
}
.chan .r {
  background: linear-gradient(90deg, #0ff 15%, #fff);
}
.chan .g {
  background: linear-gradient(90deg, #f0f 15%, #fff);
}
.chan .b {
  background: linear-gradient(90deg, #ff0 15%, #fff);
}
.chan .a {
  background: linear-gradient(90deg, #000 15%, #fff);
}
.color-body .presets-head {
  margin-top: 8px;
}
.presets {
  display: flex;
  margin-top: 3px;
}
.presets button {
  width: 11px;
  height: 12px;
  border: 1px solid #777;
  background: #fafafa;
}
.presets svg {
  display: block;
}

.cursor {
  position: absolute;
  left: 724px;
  top: 305px;
  width: 18px;
  height: 26px;
}
.watermark {
  position: absolute;
  left: 0;
  bottom: 0;
  width: 400px;
  height: 70px;
}
.watermark text {
  font: 49px Lato, sans-serif;
  fill: #000;
  stroke: #fff;
  stroke-width: 18px;
  stroke-linejoin: round;
  paint-order: stroke;
}
```
